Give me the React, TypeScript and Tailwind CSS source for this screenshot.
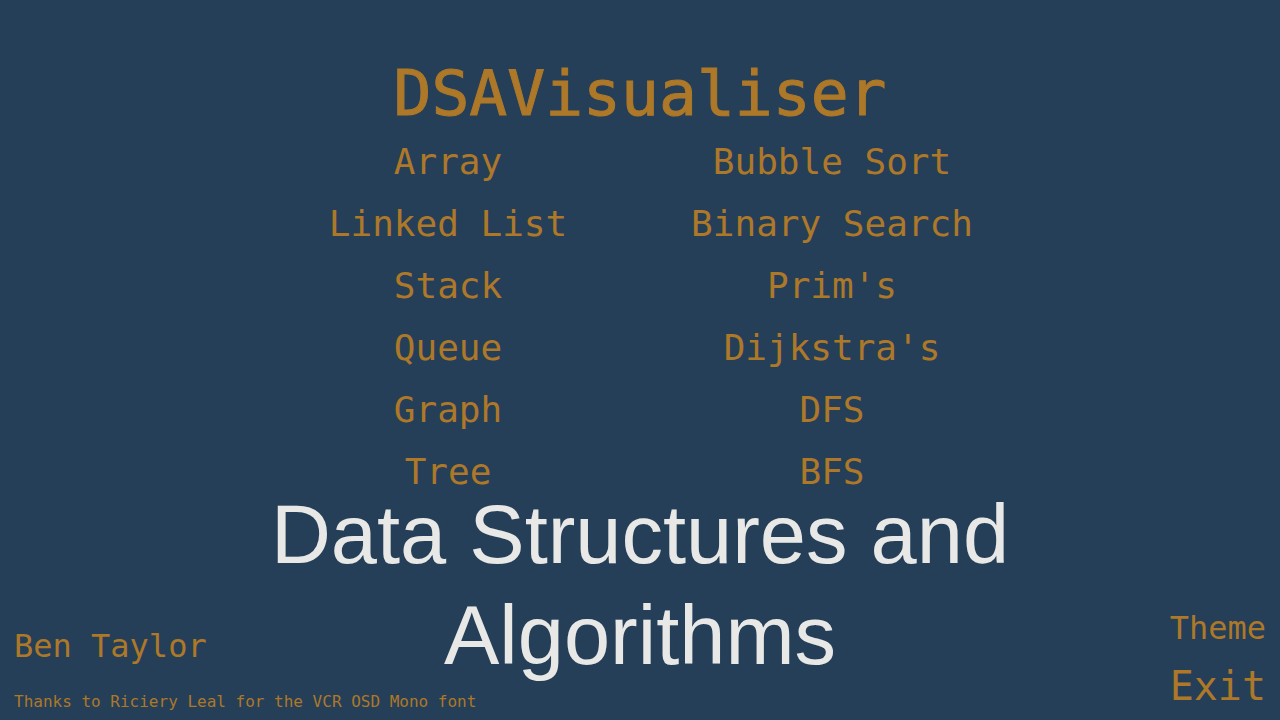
const structures = ["Array", "Linked List", "Stack", "Queue", "Graph", "Tree"];

const algorithms = [
  "Bubble Sort",
  "Binary Search",
  "Prim's",
  "Dijkstra's",
  "DFS",
  "BFS",
];

function MenuColumn({ items }: { items: string[] }) {
  return (
    <ul className="flex flex-col items-center gap-[26px]">
      {items.map((item) => (
        <li key={item}>
          <button
            type="button"
            className="block whitespace-nowrap text-4xl leading-9 hover:text-[#e0a040]"
          >
            {item}
          </button>
        </li>
      ))}
    </ul>
  );
}

export default function App() {
  return (
    <div className="relative flex min-h-screen flex-col bg-[#263f59] font-['DejaVu_Sans_Mono',monospace] text-[#ad7828]">
      <main className="flex flex-1 flex-col items-center pt-14">
        <h1 className="text-[63px] leading-[76px] [-webkit-text-stroke:1px_#ad7828]">
          DSAVisualiser
        </h1>
        <nav className="mt-3 grid w-3/5 grid-cols-2">
          <MenuColumn items={structures} />
          <MenuColumn items={algorithms} />
        </nav>
      </main>

      <footer className="flex items-end justify-between px-3.5 pb-1.5">
        <div>
          <p className="text-[32px] leading-10">Ben Taylor</p>
          <p className="mt-6 text-base leading-6">
            Thanks to Riciery Leal for the VCR OSD Mono font
          </p>
        </div>
        <div className="flex flex-col items-start">
          <button type="button" className="text-[32px] leading-10">
            Theme
          </button>
          <button type="button" className="mt-2.5 text-[40px] leading-14">
            Exit
          </button>
        </div>
      </footer>

      {/* caption laid over the menu */}
      <div className="pointer-events-none absolute inset-x-0 bottom-[34px] flex justify-center">
        <h2 className="w-3/5 text-center font-['Liberation_Sans',Arial,sans-serif] text-[83px] leading-[101px] text-[#e8e8e6]">
          Data Structures and Algorithms
        </h2>
      </div>
    </div>
  );
}
